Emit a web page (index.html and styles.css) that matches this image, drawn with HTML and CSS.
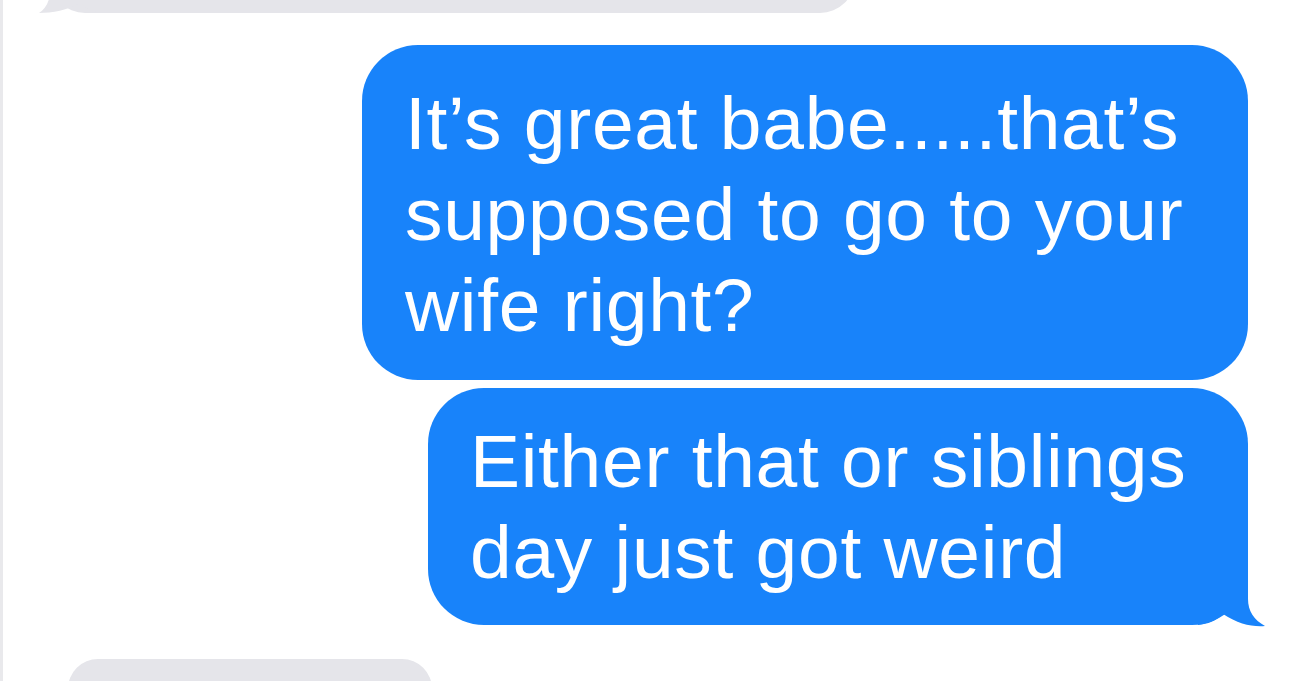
FILE: index.html
```
<!DOCTYPE html>
<html lang="en">
<head>
    <meta charset="UTF-8">
    <meta name="viewport" content="width=device-width, initial-scale=1.0">
    <title>Messages</title>
    <link rel="stylesheet" href="styles.css">
</head>
<body>
    <div class="thread">
        <!-- 上一条收到的消息（被截掉） -->
        <div class="bubble received cut-top">
            <svg class="tail tail-left" width="70" height="40" viewBox="0 0 70 40">
                <path d="M12 0 L12 18 C12 29 7 36 1 40 C14 40 30 37 42 30 C48 36 56 39 68 40 L68 0 Z"/>
            </svg>
        </div>

        <div class="bubble sent first">It’s great babe.....that’s<br>supposed to go to your<br>wife right?</div>

        <div class="bubble sent last">Either that or siblings<br>day just got weird
            <svg class="tail tail-right" width="70" height="62" viewBox="0 0 70 62">
                <path d="M50 0 L50 34 C50 46 56 55 67 61 C54 62 40 59 25 49 C18 56 10 59 0 60 L0 0 Z"/>
            </svg>
        </div>

        <!-- 下一条收到的消息（被截掉） -->
        <div class="bubble received cut-bottom"></div>
    </div>
</body>
</html>
```

FILE: styles.css
```
html, body {
    margin: 0;
    height: 100%;
    background: #fff;
}
body {
    font-family: 'Liberation Sans', Arial, sans-serif;
    overflow: hidden;
}
.thread {
    height: 100vh;
    box-sizing: border-box;
    border-left: 3px solid #e9e9ec;
    padding-right: 52px;
    display: flex;
    flex-direction: column;
    overflow: hidden;
}
.bubble {
    position: relative;
    flex-shrink: 0;
    box-sizing: border-box;
    border-radius: 56px;
    font-size: 75px;
    line-height: 91px;
    letter-spacing: 0.7px;
    white-space: nowrap;
}
.received {
    align-self: flex-start;
    background: #e5e5ea;
}
.sent {
    align-self: flex-end;
    background: #1883fa;
    color: #fff;
}
.cut-top {
    width: 805px;
    height: 70px;
    margin-top: -57px;
    margin-left: 47px;
}
.first {
    width: 886px;
    margin-top: 32px;
    padding: 33px 20px 29px 43px;
}
.last {
    width: 820px;
    margin-top: 8px;
    padding: 28px 20px 27px 42px;
}
.cut-bottom {
    width: 364px;
    height: 60px;
    margin-top: 34px;
    margin-left: 65px;
}
.tail {
    position: absolute;
    bottom: 0;
}
.tail-left {
    left: -12px;
    fill: #e5e5ea;
}
.tail-right {
    right: -20px;
    bottom: -2px;
    fill: #1883fa;
}
```
